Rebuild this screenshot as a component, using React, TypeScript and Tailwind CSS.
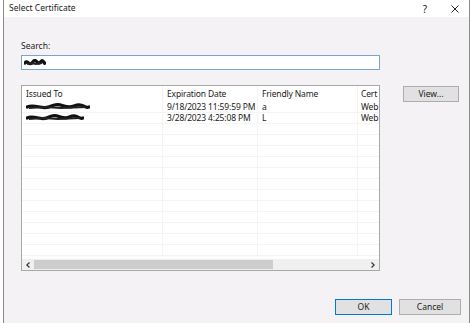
import React from "react"

const font = { fontFamily: '"Noto Sans", "Open Sans", sans-serif' }

function Scribble({ w }: { w: number }) {
  // redaction marks over the certificate names
  return (
    <svg width={w} height="8" viewBox={`0 0 ${w} 8`} className="block">
      <path
        d={`M1 4 C ${w * 0.15} 0, ${w * 0.25} 8, ${w * 0.4} 3 S ${w * 0.6} 7, ${w * 0.75} 3 S ${w * 0.9} 6, ${w - 1} 4`}
        stroke="#111"
        strokeWidth="3.2"
        fill="none"
        strokeLinecap="round"
      />
      <path
        d={`M3 5 L ${w * 0.3} 4 L ${w * 0.55} 5 L ${w - 4} 4`}
        stroke="#222"
        strokeWidth="2"
        fill="none"
      />
    </svg>
  )
}

const rows = [
  { issued: 64, date: "9/18/2023 11:59:59 PM", name: "a", cert: "Web" },
  { issued: 58, date: "3/28/2023 4:25:08 PM", name: "L", cert: "Web" },
]

export default function App() {
  const cell = "border-r border-[#f3f3f3] pl-[4px] overflow-hidden whitespace-nowrap"
  const last = "w-[21px] pl-[3px] h-full flex items-center overflow-hidden whitespace-nowrap"
  const empty = Array.from({ length: 12 })

  return (
    <div
      className="w-[474px] h-[323px] bg-white flex overflow-hidden text-[9px] text-[#1a1a1a]"
      style={font}
    >
      <div className="w-[3px] bg-white" />
      <div className="w-[467px] h-full border-l border-r border-[#8a8a8a] flex flex-col">
        {/* title bar */}
        <div className="h-[17px] bg-white flex items-center pl-[5px] pr-[10px] shrink-0">
          <span className="text-[8.5px] leading-none">Select Certificate</span>
          <div className="flex-1" />
          <span className="text-[10px] leading-none mr-[24px]">?</span>
          <svg width="8" height="8" viewBox="0 0 8 8">
            <path d="M0.5 0.5 L7.5 7.5 M7.5 0.5 L0.5 7.5" stroke="#222" strokeWidth="1" />
          </svg>
        </div>

        {/* body */}
        <div className="flex-1 bg-[#f5f2f5] pl-[17px] pt-[25px] flex flex-col">
          <div className="leading-none h-[12px] text-[8.5px]">Search:</div>
          <div className="w-[359px] h-[15px] mt-[1px] bg-white border border-[#7aa5cf] flex items-center pl-[2px]">
            <Scribble w={22} />
          </div>

          <div className="flex mt-[15px]">
            {/* certificate list */}
            <div className="w-[359px] h-[186px] border border-[#a8a8a8] bg-white flex flex-col text-[8.5px] tracking-[-0.15px]">
              <div className="flex-1 overflow-hidden">
                <div className="flex h-[16px] items-center leading-none">
                  <div className={`${cell} w-[141px] h-full flex items-center`}>Issued To</div>
                  <div className={`${cell} w-[95px] h-full flex items-center`}>Expiration Date</div>
                  <div className={`${cell} w-[100px] h-full flex items-center`}>Friendly Name</div>
                  <div className={last}>Cert</div>
                </div>
                {rows.map((r, i) => (
                  <div
                    key={i}
                    className="flex h-[11px] items-center leading-none border-b border-[#f4f4f4]"
                  >
                    <div className={`${cell} w-[141px] h-full flex items-center`}>
                      <Scribble w={r.issued} />
                    </div>
                    <div className={`${cell} w-[95px] h-full flex items-center`}>{r.date}</div>
                    <div className={`${cell} w-[100px] h-full flex items-center`}>{r.name}</div>
                    <div className={last}>{r.cert}</div>
                  </div>
                ))}
                {empty.map((_, i) => (
                  <div key={i} className="flex h-[11px] border-b border-[#f4f4f4]">
                    <div className={`${cell} w-[141px] h-full`} />
                    <div className={`${cell} w-[95px] h-full`} />
                    <div className={`${cell} w-[100px] h-full`} />
                    <div className="w-[21px] h-full" />
                  </div>
                ))}
              </div>
              {/* horizontal scrollbar */}
              <div className="h-[11px] bg-[#f0f0f0] flex items-center shrink-0">
                <div className="w-[12px] flex justify-center">
                  <svg width="4" height="6" viewBox="0 0 4 6">
                    <path d="M3.5 0.5 L0.8 3 L3.5 5.5" stroke="#333" strokeWidth="1.2" fill="none" />
                  </svg>
                </div>
                <div className="w-[239px] h-[9px] bg-[#cdcdcd]" />
                <div className="flex-1" />
                <div className="w-[12px] flex justify-center">
                  <svg width="4" height="6" viewBox="0 0 4 6">
                    <path d="M0.5 0.5 L3.2 3 L0.5 5.5" stroke="#333" strokeWidth="1.2" fill="none" />
                  </svg>
                </div>
              </div>
            </div>

            <button className="ml-[23px] mt-[1px] w-[56px] h-[16px] bg-[#e1e1e1] border border-[#adadad] text-[8.5px] leading-none">
              View...
            </button>
          </div>

          <div className="flex justify-end pr-[8px] mt-[28px] gap-[7px]">
            <button className="w-[57px] h-[16px] bg-[#e1e1e1] border border-[#0078d7] text-[8.5px] leading-none">
              OK
            </button>
            <button className="w-[62px] h-[16px] bg-[#e1e1e1] border border-[#adadad] text-[8.5px] leading-none">
              Cancel
            </button>
          </div>
        </div>
      </div>
      <div className="flex-1 bg-white" />
    </div>
  )
}
